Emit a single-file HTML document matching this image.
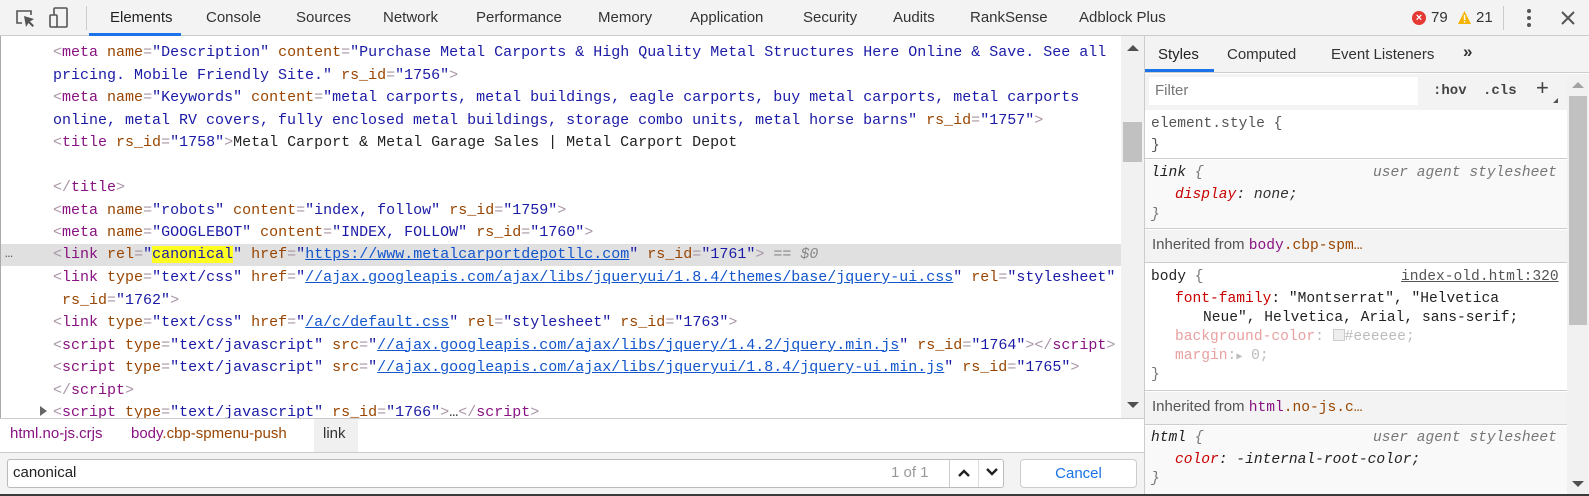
<!DOCTYPE html>
<html><head><meta charset="utf-8">
<style>
*{margin:0;padding:0;box-sizing:border-box}
body{width:1589px;height:496px;overflow:hidden;background:#fff;font-family:"Liberation Sans",sans-serif;position:relative;color:#333}
.abs{position:absolute}
.mono{font-family:"Liberation Mono",monospace;font-size:15px;white-space:pre}
.t{color:#881280}.b{color:#a894a6}.a{color:#994500}.v{color:#1a1aa6}.l{color:#1155cc;text-decoration:underline}.k{color:#222}
.row{position:absolute;left:53px;height:22.5px;line-height:22.5px}
.tab{position:absolute;top:0;height:35px;line-height:36px;font-size:15px;color:#333}
.sp{font-family:"Liberation Mono",monospace;font-size:14.6px;white-space:pre;position:absolute;line-height:20px}
.pn{color:#c80000}
</style></head><body>
<!-- toolbar -->
<div class="abs" style="left:0;top:0;width:1589px;height:36px;background:#f3f3f3;border-bottom:1px solid #ccc"></div>
<svg class="abs" style="left:13px;top:6px" width="24" height="24" viewBox="0 0 24 24"><path d="M9 17H4V5h14v4" fill="none" stroke="#555" stroke-width="1.6"/><path d="M11 10l2 11 2.5-4 4 4 1.5-1.5-4-4 4-2.5z" fill="#555"/></svg>
<svg class="abs" style="left:47px;top:6px" width="24" height="24" viewBox="0 0 24 24"><rect x="7" y="2" width="13" height="19" rx="1" fill="none" stroke="#555" stroke-width="1.6"/><rect x="3" y="9" width="7" height="12" rx="1" fill="#f3f3f3" stroke="#555" stroke-width="1.6"/></svg>
<div class="abs" style="left:86px;top:6px;width:1px;height:24px;background:#ccc"></div>
<div class="tab" style="left:110px;color:#222">Elements</div>
<div class="abs" style="left:89px;top:33px;width:92px;height:3px;background:#1a73e8"></div>
<div class="tab" style="left:206px">Console</div>
<div class="tab" style="left:296px">Sources</div>
<div class="tab" style="left:383px">Network</div>
<div class="tab" style="left:476px">Performance</div>
<div class="tab" style="left:598px">Memory</div>
<div class="tab" style="left:690px">Application</div>
<div class="tab" style="left:803px">Security</div>
<div class="tab" style="left:893px">Audits</div>
<div class="tab" style="left:970px">RankSense</div>
<div class="tab" style="left:1079px">Adblock Plus</div>
<div class="abs" style="left:1412px;top:11px;width:14px;height:14px;border-radius:50%;background:#e53935;color:#fff;font-size:11px;line-height:14px;text-align:center;font-weight:bold">×</div>
<div class="tab" style="left:1431px">79</div>
<svg class="abs" style="left:1457px;top:10px" width="15" height="15" viewBox="0 0 15 15"><path d="M7.5 1L14 14H1z" fill="#f4b400"/><rect x="6.8" y="5" width="1.5" height="5" fill="#fff"/><rect x="6.8" y="11" width="1.5" height="1.5" fill="#fff"/></svg>
<div class="tab" style="left:1476px">21</div>
<div class="abs" style="left:1503px;top:6px;width:1px;height:24px;background:#ccc"></div>
<div class="abs" style="left:1527px;top:9px;width:4px;height:4px;border-radius:50%;background:#555;box-shadow:0 7px 0 #555,0 14px 0 #555"></div>
<svg class="abs" style="left:1561px;top:11px" width="14" height="14" viewBox="0 0 14 14"><path d="M1 1L13 13M13 1L1 13" stroke="#555" stroke-width="2"/></svg>

<!-- elements code -->
<div class="abs" style="left:0;top:36px;width:1px;height:458px;background:#aaa"></div>
<div class="abs" style="left:1px;top:243.5px;width:1120px;height:22.5px;background:#e0e0e0"></div>
<div class="abs mono" style="left:5px;top:243px;line-height:22px;color:#555;font-size:13px">…</div>
<div class="abs" style="left:0;top:36px;width:1120px;height:382px;overflow:hidden">
<div class="mono" style="position:absolute;left:0;top:1px">
<div class="row" style="top:-17px"><span class="l">...................................</span>.................<span class="l">...................................................</span></div>
<div class="row" style="top:5px"><span class="b">&lt;</span><span class="t">meta</span> <span class="a">name</span><span class="b">=</span><span class="v">"Description"</span> <span class="a">content</span><span class="b">=</span><span class="v">"Purchase Metal Carports &amp; High Quality Metal Structures Here Online &amp; Save. See all</span></div>
<div class="row" style="top:27.5px"><span class="v">pricing. Mobile Friendly Site."</span> <span class="a">rs_id</span><span class="b">=</span><span class="v">"1756"</span><span class="b">&gt;</span></div>
<div class="row" style="top:50px"><span class="b">&lt;</span><span class="t">meta</span> <span class="a">name</span><span class="b">=</span><span class="v">"Keywords"</span> <span class="a">content</span><span class="b">=</span><span class="v">"metal carports, metal buildings, eagle carports, buy metal carports, metal carports</span></div>
<div class="row" style="top:72.5px"><span class="v">online, metal RV covers, fully enclosed metal buildings, storage combo units, metal horse barns"</span> <span class="a">rs_id</span><span class="b">=</span><span class="v">"1757"</span><span class="b">&gt;</span></div>
<div class="row" style="top:95px"><span class="b">&lt;</span><span class="t">title</span> <span class="a">rs_id</span><span class="b">=</span><span class="v">"1758"</span><span class="b">&gt;</span><span class="k">Metal Carport &amp; Metal Garage Sales | Metal Carport Depot</span></div>
<div class="row" style="top:140px"><span class="b">&lt;/</span><span class="t">title</span><span class="b">&gt;</span></div>
<div class="row" style="top:162.5px"><span class="b">&lt;</span><span class="t">meta</span> <span class="a">name</span><span class="b">=</span><span class="v">"robots"</span> <span class="a">content</span><span class="b">=</span><span class="v">"index, follow"</span> <span class="a">rs_id</span><span class="b">=</span><span class="v">"1759"</span><span class="b">&gt;</span></div>
<div class="row" style="top:185px"><span class="b">&lt;</span><span class="t">meta</span> <span class="a">name</span><span class="b">=</span><span class="v">"GOOGLEBOT"</span> <span class="a">content</span><span class="b">=</span><span class="v">"INDEX, FOLLOW"</span> <span class="a">rs_id</span><span class="b">=</span><span class="v">"1760"</span><span class="b">&gt;</span></div>
<div class="row" style="top:206.5px"><span class="b">&lt;</span><span class="t">link</span> <span class="a">rel</span><span class="b">=</span><span class="v">"<span style="background:#ffff22">canonical</span>"</span> <span class="a">href</span><span class="b">=</span><span class="v">"</span><span class="l">https://www.metalcarportdepotllc.com</span><span class="v">"</span> <span class="a">rs_id</span><span class="b">=</span><span class="v">"1761"</span><span class="b">&gt;</span> <span style="color:#888">== <i>$0</i></span></div>
<div class="row" style="top:230px"><span class="b">&lt;</span><span class="t">link</span> <span class="a">type</span><span class="b">=</span><span class="v">"text/css"</span> <span class="a">href</span><span class="b">=</span><span class="v">"</span><span class="l">//ajax.googleapis.com/ajax/libs/jqueryui/1.8.4/themes/base/jquery-ui.css</span><span class="v">"</span> <span class="a">rel</span><span class="b">=</span><span class="v">"stylesheet"</span></div>
<div class="row" style="top:252.5px"> <span class="a">rs_id</span><span class="b">=</span><span class="v">"1762"</span><span class="b">&gt;</span></div>
<div class="row" style="top:275px"><span class="b">&lt;</span><span class="t">link</span> <span class="a">type</span><span class="b">=</span><span class="v">"text/css"</span> <span class="a">href</span><span class="b">=</span><span class="v">"</span><span class="l">/a/c/default.css</span><span class="v">"</span> <span class="a">rel</span><span class="b">=</span><span class="v">"stylesheet"</span> <span class="a">rs_id</span><span class="b">=</span><span class="v">"1763"</span><span class="b">&gt;</span></div>
<div class="row" style="top:297.5px"><span class="b">&lt;</span><span class="t">script</span> <span class="a">type</span><span class="b">=</span><span class="v">"text/javascript"</span> <span class="a">src</span><span class="b">=</span><span class="v">"</span><span class="l">//ajax.googleapis.com/ajax/libs/jquery/1.4.2/jquery.min.js</span><span class="v">"</span> <span class="a">rs_id</span><span class="b">=</span><span class="v">"1764"</span><span class="b">&gt;&lt;/</span><span class="t">script</span><span class="b">&gt;</span></div>
<div class="row" style="top:320px"><span class="b">&lt;</span><span class="t">script</span> <span class="a">type</span><span class="b">=</span><span class="v">"text/javascript"</span> <span class="a">src</span><span class="b">=</span><span class="v">"</span><span class="l">//ajax.googleapis.com/ajax/libs/jqueryui/1.8.4/jquery-ui.min.js</span><span class="v">"</span> <span class="a">rs_id</span><span class="b">=</span><span class="v">"1765"</span><span class="b">&gt;</span></div>
<div class="row" style="top:342.5px"><span class="b">&lt;/</span><span class="t">script</span><span class="b">&gt;</span></div>
<div class="row" style="top:365px"><span class="b">&lt;</span><span class="t">script</span> <span class="a">type</span><span class="b">=</span><span class="v">"text/javascript"</span> <span class="a">rs_id</span><span class="b">=</span><span class="v">"1766"</span><span class="b">&gt;</span>…<span class="b">&lt;/</span><span class="t">script</span><span class="b">&gt;</span></div>
</div>
<div class="abs" style="left:40px;top:370px;width:0;height:0;border-left:7px solid #666;border-top:5px solid transparent;border-bottom:5px solid transparent"></div>
</div>
<!-- left scrollbar -->
<div class="abs" style="left:1121px;top:36px;width:23px;height:382px;background:#f1f1f1"></div>
<div class="abs" style="left:1127px;top:45px;border-bottom:6px solid #505050;border-left:6px solid transparent;border-right:6px solid transparent"></div>
<div class="abs" style="left:1123px;top:122px;width:19px;height:40px;background:#c1c1c1"></div>
<div class="abs" style="left:1127px;top:402px;border-top:6px solid #505050;border-left:6px solid transparent;border-right:6px solid transparent"></div>

<!-- breadcrumbs -->
<div class="abs" style="left:0;top:418px;width:1144px;height:35px;background:#fff;border-top:1px solid #ccc;border-bottom:1px solid #ccc"></div>
<div class="abs" style="left:314px;top:419px;width:44px;height:33px;background:#f0f0f0"></div>
<div class="abs" style="left:10px;top:423px;font-size:15px;line-height:22px;color:#881280">html.no-js.crjs</div>
<div class="abs" style="left:131px;top:423px;font-size:15px;line-height:22px"><span style="color:#881280">body</span><span style="color:#994500">.cbp-spmenu-push</span></div>
<div class="abs" style="left:323px;top:423px;font-size:15px;line-height:22px;color:#333">link</div>

<!-- search bar -->
<div class="abs" style="left:0;top:453px;width:1144px;height:41px;background:#f3f3f3"></div>
<div class="abs" style="left:7px;top:459px;width:997px;height:29px;background:#fff;border:1px solid #bbb;border-radius:3px"></div>
<div class="abs" style="left:13px;top:461px;font-size:15px;line-height:24px;color:#222">canonical</div>
<div class="abs" style="left:891px;top:461px;font-size:15px;line-height:24px;color:#999">1 of 1</div>
<div class="abs" style="left:949px;top:460px;width:1px;height:27px;background:#ccc"></div>
<div class="abs" style="left:978px;top:460px;width:1px;height:27px;background:#ddd"></div>
<svg class="abs" style="left:957px;top:467px" width="14" height="12" viewBox="0 0 14 12"><path d="M2 9L7 4L12 9" fill="none" stroke="#222" stroke-width="2.4"/></svg>
<svg class="abs" style="left:985px;top:466px" width="14" height="12" viewBox="0 0 14 12"><path d="M2 3L7 8L12 3" fill="none" stroke="#222" stroke-width="2.4"/></svg>
<div class="abs" style="left:1020px;top:459px;width:117px;height:29px;background:#fff;border:1px solid #ccc;border-radius:4px;text-align:center;font-size:15px;line-height:27px;color:#1a73e8">Cancel</div>

<!-- right pane -->
<div class="abs" style="left:1144px;top:36px;width:1px;height:458px;background:#ccc"></div>
<div class="abs" style="left:1145px;top:36px;width:444px;height:37px;background:#f3f3f3;border-bottom:1px solid #ccc"></div>
<div class="abs" style="left:1158px;top:44px;font-size:15px;line-height:22px;color:#222">Styles</div>
<div class="abs" style="left:1145px;top:69px;width:69px;height:3px;background:#1a73e8"></div>
<div class="abs" style="left:1227px;top:44px;font-size:15px;line-height:22px;color:#333">Computed</div>
<div class="abs" style="left:1331px;top:44px;font-size:15px;line-height:22px;color:#333">Event Listeners</div>
<div class="abs" style="left:1463px;top:41px;font-size:17px;line-height:22px;color:#333;font-weight:bold">»</div>
<div class="abs" style="left:1145px;top:74px;width:422px;height:36px;background:#f3f3f3"></div>
<div class="abs" style="left:1149px;top:77px;width:269px;height:28px;background:#fff"></div>
<div class="abs" style="left:1155px;top:81px;font-size:15px;line-height:20px;color:#777">Filter</div>
<div class="abs" style="left:1433px;top:81px;font-family:'Liberation Mono',monospace;font-size:14px;font-weight:bold;line-height:20px;color:#444">:hov</div>
<div class="abs" style="left:1483px;top:81px;font-family:'Liberation Mono',monospace;font-size:14px;font-weight:bold;line-height:20px;color:#444">.cls</div>
<div class="abs" style="left:1536px;top:76px;font-size:22px;line-height:24px;color:#444">+</div>
<div class="abs" style="left:1553px;top:98px;border-bottom:5px solid #555;border-left:5px solid transparent"></div>

<div class="abs" style="left:1145px;top:110px;width:422px;height:49px;background:#fff;border-bottom:1px solid #ccc"></div>
<div class="sp" style="left:1151px;top:114px;color:#555">element.style {</div>
<div class="sp" style="left:1151px;top:136px;color:#555">}</div>
<div class="abs" style="left:1145px;top:160px;width:422px;height:69px;background:#f9f9f9;border-bottom:1px solid #ccc"></div>
<div class="sp" style="left:1151px;top:163px;color:#222"><i>link</i> <span style="color:#777"><i>{</i></span></div>
<div class="sp" style="left:1373px;top:163px;color:#777"><i>user agent stylesheet</i></div>
<div class="sp" style="left:1175px;top:185px"><i><span class="pn">display</span>: none;</i></div>
<div class="sp" style="left:1151px;top:205px;color:#777"><i>}</i></div>
<div class="abs" style="left:1145px;top:230px;width:422px;height:33px;background:#f3f3f3;border-bottom:1px solid #ccc"></div>
<div class="abs" style="left:1152px;top:234px;font-size:15px;line-height:22px;color:#555">Inherited from <span style="font-family:'Liberation Mono',monospace;font-size:14.6px"><span class="t">body</span><span class="a">.cbp-spm…</span></span></div>
<div class="abs" style="left:1145px;top:264px;width:422px;height:127px;background:#fff;border-bottom:1px solid #ccc"></div>
<div class="sp" style="left:1151px;top:267px;color:#222">body <span style="color:#777">{</span></div>
<div class="sp" style="left:1401px;top:267px;color:#555;text-decoration:underline">index-old.html:320</div>
<div class="sp" style="left:1175px;top:289px;color:#222"><span class="pn">font-family</span>: "Montserrat", "Helvetica</div>
<div class="sp" style="left:1203px;top:308px;color:#222">Neue", Helvetica, Arial, sans-serif;</div>
<div class="sp" style="left:1175px;top:327px;color:#bbb"><span style="color:#e9a0a0">background-color</span>: <span style="display:inline-block;width:12px;height:12px;border:1px solid #ccc;background:#eee;vertical-align:-1px"></span>#eeeeee;</div>
<div class="sp" style="left:1175px;top:346px;color:#bbb"><span style="color:#e9a0a0">margin</span>:<span style="font-size:10px">▶</span> 0;</div>
<div class="sp" style="left:1151px;top:365px;color:#777">}</div>
<div class="abs" style="left:1145px;top:392px;width:422px;height:33px;background:#f3f3f3;border-bottom:1px solid #ccc"></div>
<div class="abs" style="left:1152px;top:396px;font-size:15px;line-height:22px;color:#555">Inherited from <span style="font-family:'Liberation Mono',monospace;font-size:14.6px"><span class="t">html</span><span class="a">.no-js.c…</span></span></div>
<div class="abs" style="left:1145px;top:426px;width:422px;height:68px;background:#f9f9f9"></div>
<div class="sp" style="left:1151px;top:428px;color:#222"><i>html</i> <span style="color:#777"><i>{</i></span></div>
<div class="sp" style="left:1373px;top:428px;color:#777"><i>user agent stylesheet</i></div>
<div class="sp" style="left:1175px;top:450px;color:#222"><i><span class="pn">color</span>: -internal-root-color;</i></div>
<div class="sp" style="left:1151px;top:469px;color:#777"><i>}</i></div>
<!-- right scrollbar -->
<div class="abs" style="left:1567px;top:74px;width:22px;height:420px;background:#f1f1f1"></div>
<div class="abs" style="left:1572px;top:82px;border-bottom:6px solid #a3a3a3;border-left:6px solid transparent;border-right:6px solid transparent"></div>
<div class="abs" style="left:1569px;top:96px;width:18px;height:229px;background:#c1c1c1"></div>
<div class="abs" style="left:1572px;top:481px;border-top:6px solid #505050;border-left:6px solid transparent;border-right:6px solid transparent"></div>
<div class="abs" style="left:0;top:494px;width:1589px;height:2px;background:#3a3a3a"></div>
</body></html>
